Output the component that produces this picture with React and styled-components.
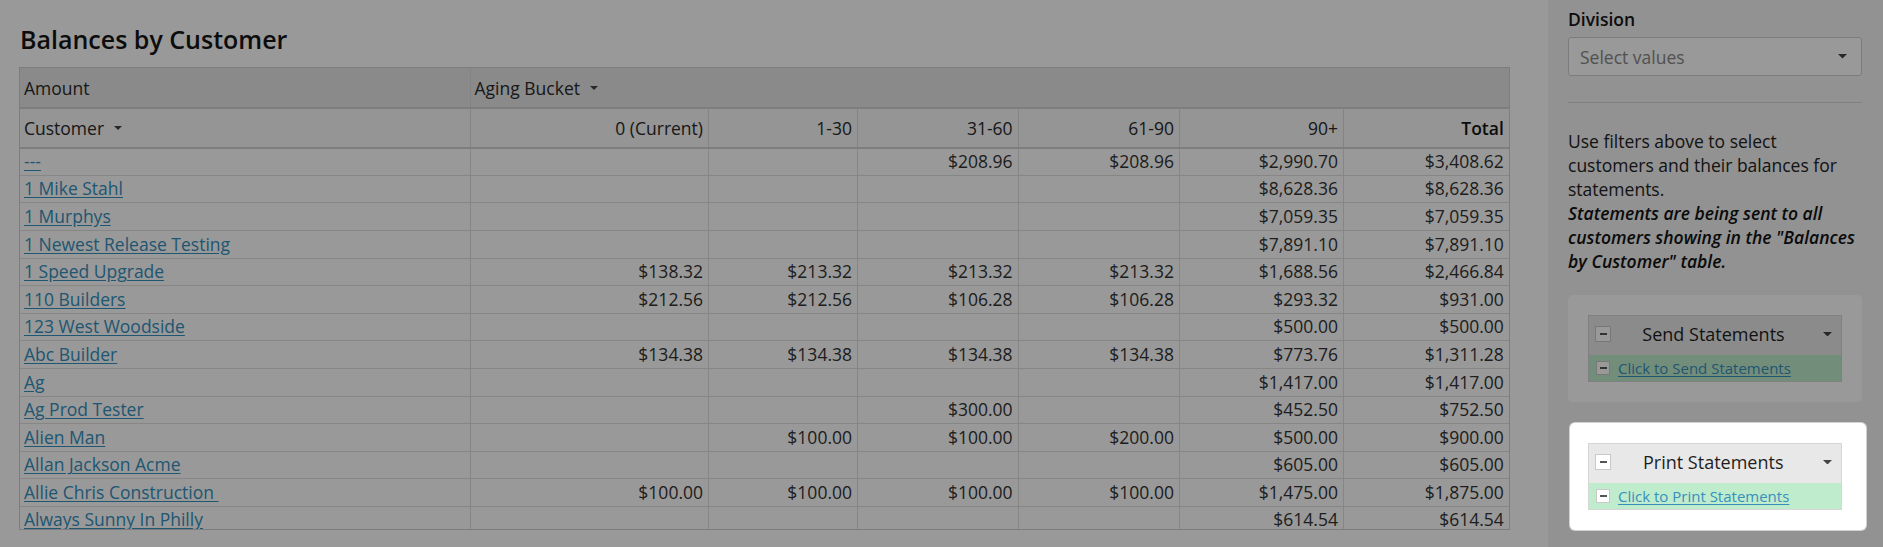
import React from "react";
import styled, { createGlobalStyle } from "styled-components";

const GlobalStyle = createGlobalStyle`
  html, body {
    margin: 0;
    padding: 0;
  }
  body {
    font-family: "Open Sans", "Liberation Sans", sans-serif;
    color: #333;
    background: #fff;
  }
`;

const rows = [
  ["---", "", "", "$208.96", "$208.96", "$2,990.70", "$3,408.62"],
  ["1 Mike Stahl", "", "", "", "", "$8,628.36", "$8,628.36"],
  ["1 Murphys", "", "", "", "", "$7,059.35", "$7,059.35"],
  ["1 Newest Release Testing", "", "", "", "", "$7,891.10", "$7,891.10"],
  ["1 Speed Upgrade", "$138.32", "$213.32", "$213.32", "$213.32", "$1,688.56", "$2,466.84"],
  ["110 Builders", "$212.56", "$212.56", "$106.28", "$106.28", "$293.32", "$931.00"],
  ["123 West Woodside", "", "", "", "", "$500.00", "$500.00"],
  ["Abc Builder", "$134.38", "$134.38", "$134.38", "$134.38", "$773.76", "$1,311.28"],
  ["Ag", "", "", "", "", "$1,417.00", "$1,417.00"],
  ["Ag Prod Tester", "", "", "$300.00", "", "$452.50", "$752.50"],
  ["Alien Man", "", "$100.00", "$100.00", "$200.00", "$500.00", "$900.00"],
  ["Allan Jackson Acme", "", "", "", "", "$605.00", "$605.00"],
  ["Allie Chris Construction ", "$100.00", "$100.00", "$100.00", "$100.00", "$1,475.00", "$1,875.00"],
  ["Always Sunny In Philly", "", "", "", "", "$614.54", "$614.54"],
];

const colWidths = [450, 238.5, 149, 160.6, 161.4, 164, 165.3];
const buckets = ["0 (Current)", "1-30", "31-60", "61-90", "90+"];

const Caret = ({ size = 9 }) => (
  <svg width={size} height={size / 2} viewBox="0 0 10 5">
    <path d="M0 0 L10 0 L5 5 Z" fill="#444" />
  </svg>
);

const Minus = ({ small }) => (
  <MinusBox $small={small}>
    <span />
  </MinusBox>
);

const StatementWidget = ({ title, link }) => (
  <Widget>
    <WidgetHeader>
      <Minus />
      <WidgetTitle>{title}</WidgetTitle>
      <CaretSlot>
        <Caret size={9} />
      </CaretSlot>
    </WidgetHeader>
    <WidgetRow>
      <Minus small />
      <Link href="#">{link}</Link>
    </WidgetRow>
  </Widget>
);

const App = () => {
  return (
    <>
      <GlobalStyle />
      <Page>
        <Main>
          <Title>Balances by Customer</Title>
          <TableWrap>
            <Table>
              <colgroup>
                {colWidths.map((w, i) => (
                  <col key={i} style={{ width: w }} />
                ))}
              </colgroup>
              <thead>
                <HeadRow $top>
                  <Th>Amount</Th>
                  <Th colSpan={6}>
                    <HeadLabel>
                      Aging Bucket <Caret size={8} />
                    </HeadLabel>
                  </Th>
                </HeadRow>
                <HeadRow>
                  <Th>
                    <HeadLabel>
                      Customer <Caret size={8} />
                    </HeadLabel>
                  </Th>
                  {buckets.map((b) => (
                    <Th key={b} $right>
                      {b}
                    </Th>
                  ))}
                  <Th $right $bold>
                    Total
                  </Th>
                </HeadRow>
              </thead>
              <tbody>
                {rows.map((r, idx) => (
                  <DataRow key={r[0]} $last={idx === rows.length - 1}>
                    <Td>
                      <Link href="#">{r[0]}</Link>
                    </Td>
                    {r.slice(1).map((v, i) => (
                      <Td key={i} $right>
                        {v}
                      </Td>
                    ))}
                  </DataRow>
                ))}
              </tbody>
            </Table>
          </TableWrap>
        </Main>

        <Sidebar>
          <Label>Division</Label>
          <Select>
            <span>Select values</span>
            <Caret size={9} />
          </Select>
          <Divider />
          <Help>
            Use filters above to select customers and their balances for statements.
            <br />
            <strong>
              <em>
                Statements are being sent to all customers showing in the "Balances by Customer"
                table.
              </em>
            </strong>
          </Help>
          <Card>
            <StatementWidget title="Send Statements" link="Click to Send Statements" />
          </Card>
          <Card $highlight>
            <StatementWidget title="Print Statements" link="Click to Print Statements" />
          </Card>
        </Sidebar>
        <Overlay />
      </Page>
    </>
  );
};

export default App;

const Page = styled.div`
  display: flex;
  height: 547px;
  overflow: hidden;
`;

const Main = styled.main`
  flex: 1;
  min-width: 0;
  padding: 22px 0 0 19px;
`;

const Title = styled.h1`
  margin: 0 0 11px 1px;
  font-size: 25px;
  font-weight: 600;
  line-height: 34px;
  color: #151515;
`;

const TableWrap = styled.div`
  width: 1490.5px;
  height: 462.5px;
  box-sizing: border-box;
  border: 1px solid #d0d0d0;
  overflow: hidden;
`;

const Table = styled.table`
  width: 100%;
  border-collapse: collapse;
  border-style: hidden;
  table-layout: fixed;
  font-size: 17.5px;
`;

const HeadRow = styled.tr`
  height: ${(p) => (p.$top ? "40px" : "39.7px")};
  background: ${(p) => (p.$top ? "#e6e6e6" : "#f8f8f8")};
  border-bottom: 2px solid #d2d2d2;
`;

const DataRow = styled.tr`
  height: ${(p) => (p.$last ? "24px" : "27.6px")};

  td {
    vertical-align: ${(p) => (p.$last ? "top" : "middle")};
    padding-top: ${(p) => (p.$last ? "3px" : "0")};
  }
`;

const Th = styled.th`
  padding: 0 5px 0 4px;
  font-weight: ${(p) => (p.$bold ? 600 : 400)};
  text-align: ${(p) => (p.$right ? "right" : "left")};
  color: ${(p) => (p.$bold ? "#151515" : "#2a2a2a")};
  border-right: 1px solid #dcdcdc;
  white-space: nowrap;
  overflow: hidden;
`;

const HeadLabel = styled.span`
  display: inline-flex;
  align-items: center;
  gap: 10px;
`;

const Td = styled.td`
  padding: 0 5px 0 4px;
  line-height: 1.1;
  text-align: ${(p) => (p.$right ? "right" : "left")};
  color: #333;
  border: 1px solid #e0e0e0;
  white-space: pre;
  overflow: hidden;
`;

const Link = styled.a`
  color: #3590bd;
  text-decoration: underline;
  text-underline-offset: 2px;
`;

const Sidebar = styled.aside`
  flex: none;
  width: 335px;
  box-sizing: border-box;
  padding: 7px 21px 0 20px;
  background: #f3f3f3;
`;

const Label = styled.div`
  font-size: 17.5px;
  font-weight: 600;
  line-height: 24px;
  color: #151515;
`;

const Select = styled.div`
  margin-top: 6px;
  height: 39px;
  box-sizing: border-box;
  border: 1px solid #cfcfcf;
  border-radius: 3px;
  background: #fff;
  display: flex;
  align-items: center;
  justify-content: space-between;
  padding: 0 14px 0 11px;
  font-size: 17.5px;
  color: #888;
`;

const Divider = styled.hr`
  border: 0;
  border-top: 1px solid #d6d6d6;
  margin: 26px 0 26px;
`;

const Help = styled.p`
  margin: 0;
  font-size: 17.5px;
  line-height: 24px;
  color: #222;

  strong {
    font-weight: 600;
    color: #111;
  }
`;

const Card = styled.div`
  margin-top: ${(p) => (p.$highlight ? "21px" : "22px")};
  margin-left: ${(p) => (p.$highlight ? "1.5px" : "0")};
  width: ${(p) => (p.$highlight ? "296px" : "auto")};
  box-sizing: border-box;
  padding: ${(p) => (p.$highlight ? "20px 24px 20px 18.5px" : "20px")};
  background: #fff;
  border-radius: 5px;
  position: ${(p) => (p.$highlight ? "relative" : "static")};
  z-index: ${(p) => (p.$highlight ? 2 : "auto")};
  box-shadow: ${(p) => (p.$highlight ? "0 0 0 1px #d2d2d2" : "none")};
`;

const Widget = styled.div`
  border: 1px solid #d6d6d6;
`;

const WidgetHeader = styled.div`
  height: 39px;
  box-sizing: border-box;
  padding: 0 9px 3px 6px;
  background: #e8e8e8;
  display: grid;
  grid-template-columns: 22px 1fr 22px;
  align-items: center;
`;

const WidgetTitle = styled.div`
  text-align: center;
  font-size: 18px;
  color: #1e1e1e;
`;

const CaretSlot = styled.div`
  display: flex;
  justify-content: flex-end;
`;

const WidgetRow = styled.div`
  height: 26px;
  background: #c0ecce;
  display: flex;
  align-items: center;
  gap: 8px;
  padding-left: 7px;
  font-size: 15px;
`;

const MinusBox = styled.span`
  width: ${(p) => (p.$small ? "14px" : "16px")};
  height: ${(p) => (p.$small ? "14px" : "16px")};
  box-sizing: border-box;
  border: 1px solid #c9c9c9;
  background: #fff;
  display: inline-flex;
  align-items: center;
  justify-content: center;

  span {
    width: 7px;
    height: 2px;
    background: #555;
  }
`;

const Overlay = styled.div`
  position: fixed;
  inset: 0;
  background: rgba(0, 0, 0, 0.4);
  z-index: 1;
  pointer-events: none;
`;
